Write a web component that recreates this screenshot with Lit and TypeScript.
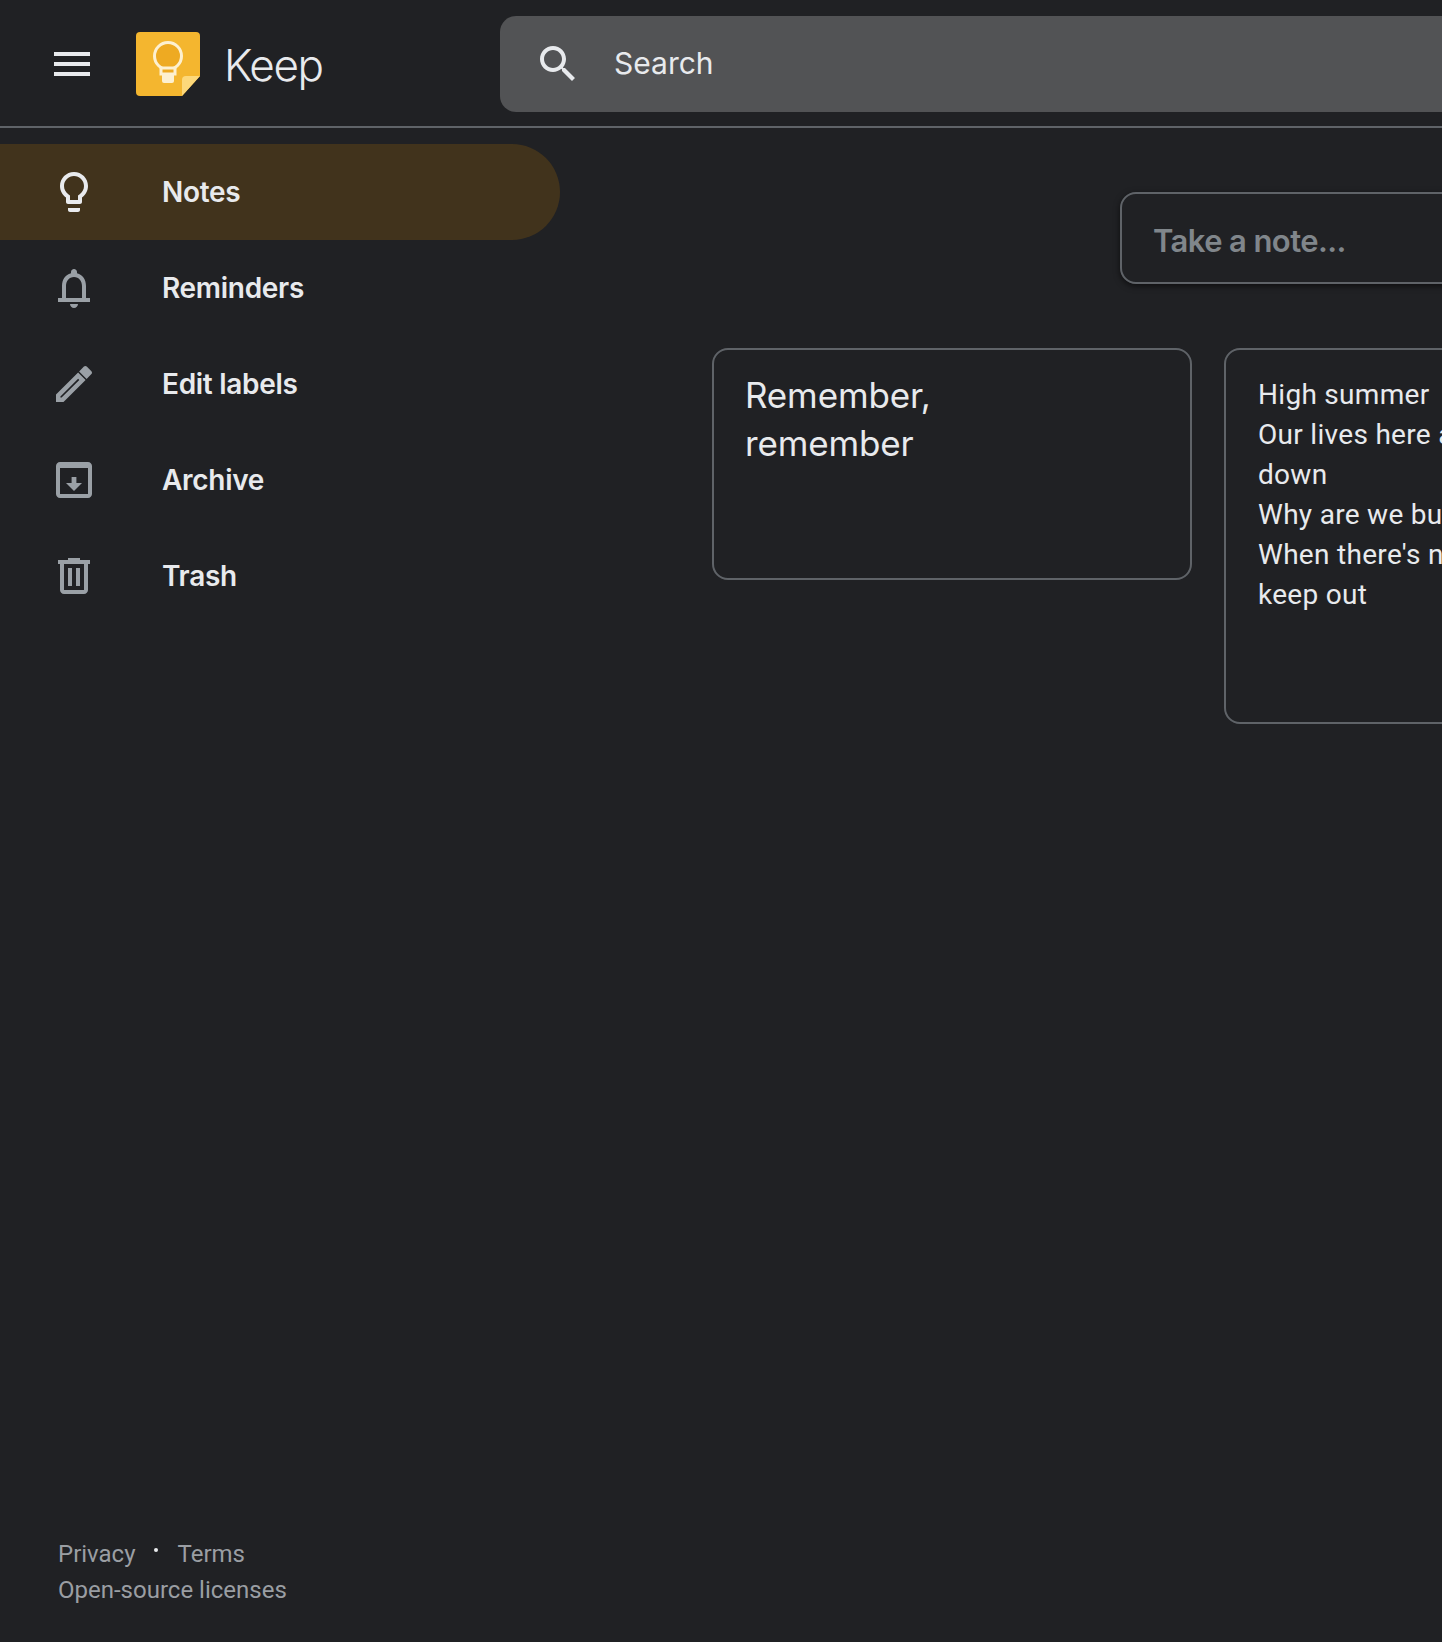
import { LitElement, html, css, svg } from 'lit';
import { customElement } from 'lit/decorators.js';

const ICONS = {
  menu: svg`<path d="M3 18h18v-2H3v2zm0-5h18v-2H3v2zm0-7v2h18V6H3z"/>`,
  search: svg`<path d="M15.5 14h-.79l-.28-.27C15.41 12.59 16 11.11 16 9.5 16 5.91 13.09 3 9.5 3S3 5.91 3 9.5 5.91 16 9.5 16c1.61 0 3.09-.59 4.23-1.57l.27.28v.79l5 4.99L20.49 19l-4.99-5zm-6 0C7.01 14 5 11.99 5 9.5S7.01 5 9.5 5 14 7.01 14 9.5 11.99 14 9.5 14z"/>`,
  bulb: svg`<path d="M9 21c0 .55.45 1 1 1h4c.55 0 1-.45 1-1v-1H9v1zm3-19C8.14 2 5 5.14 5 9c0 2.38 1.19 4.47 3 5.74V17c0 .55.45 1 1 1h6c.55 0 1-.45 1-1v-2.26c1.81-1.27 3-3.36 3-5.74 0-3.86-3.14-7-7-7zm2.85 11.1l-.85.6V16h-4v-2.3l-.85-.6C7.8 12.16 7 10.63 7 9c0-2.76 2.24-5 5-5s5 2.24 5 5c0 1.63-.8 3.16-2.15 4.1z"/>`,
  bell: svg`<path fill-rule="evenodd" d="M18 17v-6c0-3.07-1.63-5.64-4.5-6.32V4c0-.83-.67-1.5-1.5-1.5s-1.5.67-1.5 1.5v.68C7.64 5.36 6 7.92 6 11v6H4v2h16v-2h-2zM16 17H8v-6c0-2.48 1.51-4.5 4-4.5s4 2.02 4 4.5v6zM12 22c1.1 0 2-.9 2-2h-4c0 1.1.9 2 2 2z"/>`,
  pencil: svg`<path d="M17.66 3c-.25 0-.51.1-.7.29l-2.4 2.4 3.75 3.75 2.4-2.4c.39-.39.39-1.02 0-1.41l-2.34-2.34c-.2-.2-.45-.29-.71-.29z"/><path fill-rule="evenodd" d="M14.06 6.19L3 17.25V21h3.75L17.81 9.94l-3.75-3.75zM14.06 9.4l.6.6L5.8 18.8h-.6v-.6z"/>`,
  archive: svg`<path fill-rule="evenodd" d="M19 3H5c-1.1 0-2 .9-2 2v14c0 1.1.9 2 2 2h14c1.1 0 2-.9 2-2V5c0-1.1-.9-2-2-2zm0 16H5V6h14v13z"/><path d="M13.2 10.5h-2.4v3H8l4 4 4-4h-2.8z"/>`,
  trash: svg`<path d="M15 4V3H9v1H4v2h1v13c0 1.1.9 2 2 2h10c1.1 0 2-.9 2-2V6h1V4h-5zm2 15H7V6h10v13z"/><path d="M9 8h2v9H9zm4 0h2v9h-2z"/>`,
};

const NAV = [
  { icon: ICONS.bulb, label: 'Notes', active: true },
  { icon: ICONS.bell, label: 'Reminders' },
  { icon: ICONS.pencil, label: 'Edit labels' },
  { icon: ICONS.archive, label: 'Archive' },
  { icon: ICONS.trash, label: 'Trash' },
];

@customElement('app-root')
export class AppRoot extends LitElement {
  static styles = css`
    :host {
      display: flex;
      flex-direction: column;
      width: 1442px;
      height: 1642px;
      overflow: hidden;
      background: #202124;
      color: #e8eaed;
      font-family: Inter, sans-serif;
    }

    .icon {
      width: 48px;
      height: 48px;
      flex: none;
      display: block;
      fill: currentColor;
    }

    .header {
      flex: none;
      height: 126px;
      box-sizing: content-box;
      border-bottom: 2px solid #5f6368;
      display: flex;
      align-items: flex-start;
    }
    .menu {
      margin: 40px 0 0 48px;
      color: #e8eaed;
    }
    .logo {
      width: 64px;
      height: 64px;
      flex: none;
      margin: 32px 0 0 40px;
    }
    .brand {
      flex: none;
      width: 300px;
      box-sizing: border-box;
      padding-left: 24px;
      margin-top: 33px;
      font-size: 44px;
      line-height: 64px;
      font-weight: 300;
      letter-spacing: -1.4px;
      color: #e8eaed;
    }
    .search {
      flex: none;
      width: 1400px;
      height: 96px;
      margin-top: 16px;
      border-radius: 16px;
      background: #525355;
      display: flex;
      align-items: center;
      padding-left: 34px;
      gap: 32px;
      font-size: 30px;
      color: #e8eaed;
    }
    .search span {
      padding-bottom: 3px;
    }

    .body {
      flex: 1;
      display: flex;
      min-height: 0;
    }

    .side {
      flex: none;
      width: 560px;
      display: flex;
      flex-direction: column;
      padding-top: 16px;
      padding-bottom: 34px;
      box-sizing: border-box;
    }
    .item {
      height: 96px;
      display: flex;
      align-items: center;
      padding-left: 50px;
      gap: 64px;
      font-size: 28px;
      font-weight: 600;
      letter-spacing: -0.3px;
      color: #e8eaed;
      border-radius: 0 48px 48px 0;
    }
    .item .icon {
      color: #9aa0a6;
    }
    .item.active {
      background: #41331c;
    }
    .item.active .icon {
      color: #e8eaed;
    }
    .foot {
      margin-top: auto;
      padding-left: 58px;
      font-family: Roboto, sans-serif;
      font-size: 24px;
      line-height: 36px;
      color: #9a9ea3;
    }
    .foot .dot {
      display: inline-block;
      width: 4px;
      height: 4px;
      border-radius: 50%;
      background: #e8eaed;
      margin: 0 20px 0 18px;
      vertical-align: 10px;
    }

    .main {
      flex: 1;
      min-width: 0;
      padding: 64px 0 0 152px;
    }
    .take {
      width: 1000px;
      height: 92px;
      box-sizing: border-box;
      margin-left: 408px;
      border: 2px solid #5f6368;
      border-radius: 16px;
      box-shadow: 0 2px 6px rgba(0, 0, 0, 0.6);
      display: flex;
      align-items: center;
      padding: 5px 0 0 31px;
      font-size: 31px;
      font-weight: 600;
      letter-spacing: -0.6px;
      color: #80868b;
    }
    .cards {
      margin-top: 64px;
      display: flex;
      align-items: flex-start;
      gap: 32px;
    }
    .card {
      flex: none;
      width: 480px;
      box-sizing: border-box;
      border: 2px solid #5f6368;
      border-radius: 16px;
      padding: 0 31px;
      white-space: nowrap;
    }
    .card.title {
      height: 232px;
      padding-top: 21px;
      font-size: 35px;
      line-height: 48px;
      letter-spacing: -0.15px;
    }
    .card.text {
      height: 376px;
      padding: 25px 32px 0;
      font-family: Roboto, sans-serif;
      font-size: 28px;
      line-height: 40px;
      letter-spacing: 0.3px;
    }
  `;

  renderLogo() {
    return html`<svg class="logo" viewBox="0 0 64 64">
      <path d="M4 0h56a4 4 0 0 1 4 4v40L46 64H4a4 4 0 0 1-4-4V4a4 4 0 0 1 4-4z" fill="#f4b62f"/>
      <circle cx="32" cy="24" r="13.5" fill="#eeaa22" stroke="#fdf0d0" stroke-width="3"/>
      <path d="M25 36h14v6H25z" fill="#eeaa22" stroke="#fdf0d0" stroke-width="3"/>
      <path d="M26 43h12v6a2 2 0 0 1-2 2h-8a2 2 0 0 1-2-2z" fill="#fdf0d0"/>
      <path d="M64 44H50a4 4 0 0 0-4 4v16z" fill="#fdd87a"/>
    </svg>`;
  }

  render() {
    return html`
      <div class="header">
        <svg class="icon menu" viewBox="0 0 24 24">${ICONS.menu}</svg>
        ${this.renderLogo()}
        <div class="brand">Keep</div>
        <div class="search">
          <svg class="icon" viewBox="0 0 24 24">${ICONS.search}</svg>
          <span>Search</span>
        </div>
      </div>
      <div class="body">
        <nav class="side">
          ${NAV.map(
            (n) => html`<div class="item ${n.active ? 'active' : ''}">
              <svg class="icon" viewBox="0 0 24 24">${n.icon}</svg>
              <span>${n.label}</span>
            </div>`
          )}
          <div class="foot">
            <div>Privacy<span class="dot"></span>Terms</div>
            <div>Open-source licenses</div>
          </div>
        </nav>
        <main class="main">
          <div class="take">Take a note...</div>
          <div class="cards">
            <div class="card title">Remember,<br />remember</div>
            <div class="card text">
              High summer<br />
              Our lives here are winding<br />
              down<br />
              Why are we building walls<br />
              When there's nothing to<br />
              keep out
            </div>
          </div>
        </main>
      </div>
    `;
  }
}
